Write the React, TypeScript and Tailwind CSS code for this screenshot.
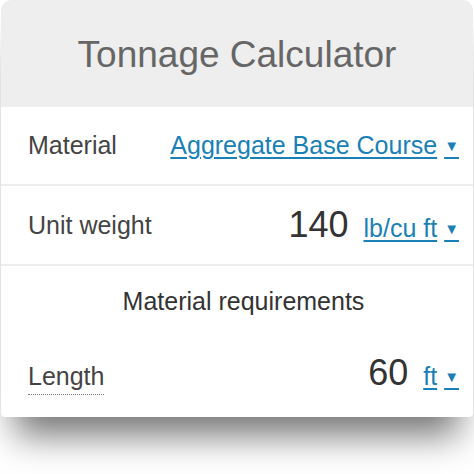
import React from "react";

function Caret() {
  return <span className="text-[15px] ml-[7px] align-[3px]">▼</span>;
}

export default function App() {
  return (
    <div
      className="w-[474px] h-[474px] bg-white pt-0 px-[1px]"
      style={{ fontFamily: '"Liberation Sans", Arial, sans-serif' }}
    >
      <div className="w-[472px] rounded-t-[10px] rounded-b-[4px] overflow-hidden bg-white shadow-[0_32px_34px_-14px_rgba(0,0,0,0.55)]">
        <div className="h-[107px] bg-[#eeeeee] flex items-center justify-center">
          <span className="text-[37px] text-[#666666] mt-[3px]">Tonnage Calculator</span>
        </div>
        <div className="h-[79px] flex items-center justify-between pl-[27px] pr-[14px] border-b-2 border-[#eeeeee]">
          <span className="text-[25px] text-[#444444]">Material</span>
          <span className="text-[25px] text-[#1a80b6] underline underline-offset-[3px] decoration-[1.5px]">
            Aggregate Base Course
            <Caret />
          </span>
        </div>
        <div className="h-[80px] flex items-center justify-between pl-[27px] pr-[14px] border-b-2 border-[#eeeeee]">
          <span className="text-[25px] text-[#444444] mt-[2px]">Unit weight</span>
          <div className="flex items-baseline gap-[15px]">
            <span className="text-[36px] text-[#333333]">140</span>
            <span className="text-[25px] text-[#1a80b6] underline underline-offset-[3px] decoration-[1.5px]">
              lb/cu ft
              <Caret />
            </span>
          </div>
        </div>
        <div className="h-[151px] flex flex-col pl-[27px] pr-[14px]">
          <div className="text-center text-[25px] leading-[30px] text-[#333333] pt-[20px]">Material requirements</div>
          <div className="flex items-baseline justify-between mt-[37px]">
            <span className="text-[25px] text-[#444444] border-b-[1.5px] border-dotted border-[#777777] leading-[30px] pb-[3px]">Length</span>
            <div className="flex items-baseline gap-[15px]">
              <span className="text-[36px] leading-[40px] text-[#333333]">60</span>
              <span className="text-[25px] leading-[30px] text-[#1a80b6] underline underline-offset-[3px] decoration-[1.5px]">
                ft
                <Caret />
              </span>
            </div>
          </div>
        </div>
      </div>
    </div>
  );
}
